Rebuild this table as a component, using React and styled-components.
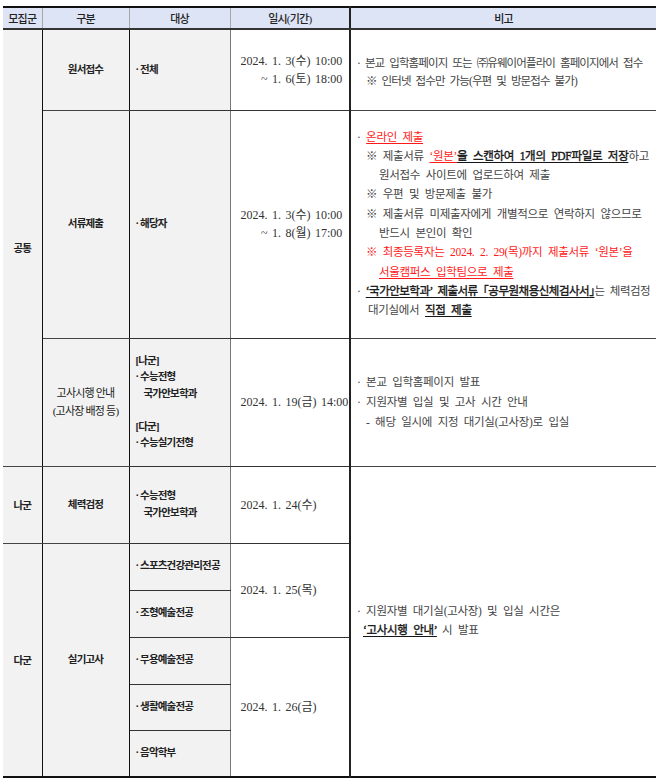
import React from 'react';
import styled, { createGlobalStyle } from 'styled-components';

const GlobalStyle = createGlobalStyle`
  body {
    margin: 0;
    background: #fff;
    font-family: "Liberation Serif", "Noto Sans CJK KR", serif;
    color: #3a3a3a;
  }
`

const Sheet = styled.table`
  margin: 6px 0 0 3px;
  width: 653px;
  table-layout: fixed;
  border-collapse: collapse;
  border-top: 2px solid #111;
  border-bottom: 2px solid #111;
`

const Row = styled.tr`
  height: ${p => p.$h}px;
`

const HeadCell = styled.th`
  background: #dde4f5;
  font-size: 11px;
  font-weight: 500;
  letter-spacing: -0.8px;
  color: #222;
  text-align: center;
  vertical-align: middle;
  padding: 0;
  border-bottom: 2px solid #333;
  border-right: ${p => p.$thick ? '2px solid #222' : p.$last ? '0' : '1px solid #a8a8a8'};
`

const GroupCell = styled.td`
  background: #f2f2f2;
  text-align: center;
  vertical-align: middle;
  padding: 0;
  font-size: 10.5px;
  font-weight: 700;
  letter-spacing: -0.8px;
  color: #222;
  border-right: 1px solid #111;
  border-bottom: 1px solid #444;
`

const KindCell = styled.td`
  background: #f2f2f2;
  text-align: center;
  vertical-align: middle;
  padding: 0;
  font-size: ${p => p.$light ? 11 : 10.5}px;
  font-weight: ${p => p.$light ? 400 : 700};
  letter-spacing: -0.8px;
  line-height: 18px;
  color: #222;
  border-right: 1px solid #111;
  border-bottom: 1px solid #444;
`

const TargetCell = styled.td`
  background: #f2f2f2;
  vertical-align: middle;
  padding: 0 0 0 6px;
  font-size: 10.5px;
  font-weight: 700;
  letter-spacing: -0.8px;
  line-height: 16.5px;
  color: #222;
  border-right: 1px solid #777;
  border-bottom: 1px solid #333;
`

const TargetLine = styled.div`
  padding-left: ${p => p.$indent || 0}px;
  min-height: 16.5px;
  white-space: nowrap;
`

const DateCell = styled.td`
  background: #fff;
  vertical-align: middle;
  padding: 0 0 0 10px;
  font-size: 12px;
  word-spacing: 1.5px;
  line-height: 18px;
  white-space: nowrap;
  color: #333;
  border-right: 2px solid #222;
  border-bottom: 1px solid #333;
`

const DateBlock = styled.div`
  display: inline-block;
  text-align: right;
`

const NoteCell = styled.td`
  background: #fff;
  vertical-align: middle;
  padding: ${p => p.$pt || 0}px 0 0 6px;
  font-size: 11.5px;
  letter-spacing: ${p => p.$tight ? -0.9 : -0.3}px;
  word-spacing: 3px;
  line-height: ${p => p.$lh || 19}px;
  color: #444;
  border-bottom: 1px solid #444;
`

const NoteLine = styled.div`
  padding-left: ${p => p.$indent || 0}px;
  white-space: nowrap;
  letter-spacing: ${p => p.$tight ? '-0.5px' : 'inherit'};
  color: ${p => p.$red ? '#ff1a1a' : 'inherit'};
`

const Red = styled.span`
  color: #ff1a1a;
  text-decoration: ${p => p.$u ? 'underline' : 'none'};
  text-underline-offset: 2px;
`

const Strong = styled.span`
  color: #151515;
  -webkit-text-stroke: 0.35px #151515;
  text-decoration: underline;
  text-decoration-thickness: 1px;
  text-underline-offset: 2px;
`

const Bracket = styled.span`
  font-feature-settings: "halt";
`

export default function App() {
  return (
    <>
      <GlobalStyle />
      <Sheet>
        <colgroup>
          <col style={{ width: 39 }} />
          <col style={{ width: 87 }} />
          <col style={{ width: 101 }} />
          <col style={{ width: 120 }} />
          <col style={{ width: 306 }} />
        </colgroup>
        <thead>
          <Row $h={22}>
            <HeadCell>모집군</HeadCell>
            <HeadCell>구분</HeadCell>
            <HeadCell>대상</HeadCell>
            <HeadCell $thick>일시(기간)</HeadCell>
            <HeadCell $last>비고</HeadCell>
          </Row>
        </thead>
        <tbody>
          <Row $h={81}>
            <GroupCell rowSpan={3}>공통</GroupCell>
            <KindCell>원서접수</KindCell>
            <TargetCell><TargetLine>· 전체</TargetLine></TargetCell>
            <DateCell>
              <DateBlock>2024. 1. 3(수) 10:00<br />~ 1. 6(토) 18:00</DateBlock>
            </DateCell>
            <NoteCell $lh={18} $pt={4} $tight>
              <NoteLine>· 본교 입학홈페이지 또는 ㈜유웨이어플라이 홈페이지에서 접수</NoteLine>
              <NoteLine $indent={9}>※ 인터넷 접수만 가능(우편 및 방문접수 불가)</NoteLine>
            </NoteCell>
          </Row>
          <Row $h={228}>
            <KindCell>서류제출</KindCell>
            <TargetCell><TargetLine>· 해당자</TargetLine></TargetCell>
            <DateCell>
              <DateBlock>2024. 1. 3(수) 10:00<br />~ 1. 8(월) 17:00</DateBlock>
            </DateCell>
            <NoteCell $lh={19.3}>
              <NoteLine>· <Red $u>온라인 제출</Red></NoteLine>
              <NoteLine $indent={9}>
                ※ 제출서류 <Red $u>‘원본’</Red><Strong>을 스캔하여 1개의 PDF파일로 저장</Strong>하고
              </NoteLine>
              <NoteLine $indent={22}>원서접수 사이트에 업로드하여 제출</NoteLine>
              <NoteLine $indent={9}>※ 우편 및 방문제출 불가</NoteLine>
              <NoteLine $indent={9}>※ 제출서류 미제출자에게 개별적으로 연락하지 않으므로</NoteLine>
              <NoteLine $indent={22}>반드시 본인이 확인</NoteLine>
              <NoteLine $indent={9} $red>※ 최종등록자는 2024. 2. 29(목)까지 제출서류 ‘원본’을</NoteLine>
              <NoteLine $indent={22}><Red $u>서울캠퍼스 입학팀으로 제출</Red></NoteLine>
              <NoteLine $tight>
                · <Strong>‘국가안보학과’ 제출서류 <Bracket>「</Bracket>공무원채용신체검사서<Bracket>」</Bracket></Strong>는 체력검정
              </NoteLine>
              <NoteLine $indent={11}>대기실에서 <Strong>직접 제출</Strong></NoteLine>
            </NoteCell>
          </Row>
          <Row $h={128}>
            <KindCell $light>고사시행 안내<br />(고사장 배정 등)</KindCell>
            <TargetCell>
              <TargetLine>[나군]</TargetLine>
              <TargetLine>· 수능전형</TargetLine>
              <TargetLine $indent={8}>국가안보학과</TargetLine>
              <TargetLine />
              <TargetLine>[다군]</TargetLine>
              <TargetLine>· 수능실기전형</TargetLine>
            </TargetCell>
            <DateCell>2024. 1. 19(금) 14:00</DateCell>
            <NoteCell $lh={20}>
              <NoteLine>· 본교 입학홈페이지 발표</NoteLine>
              <NoteLine>· 지원자별 입실 및 고사 시간 안내</NoteLine>
              <NoteLine $indent={9}>- 해당 일시에 지정 대기실(고사장)로 입실</NoteLine>
            </NoteCell>
          </Row>
          <Row $h={77}>
            <GroupCell>나군</GroupCell>
            <KindCell>체력검정</KindCell>
            <TargetCell>
              <TargetLine>· 수능전형</TargetLine>
              <TargetLine $indent={8}>국가안보학과</TargetLine>
            </TargetCell>
            <DateCell>2024. 1. 24(수)</DateCell>
            <NoteCell rowSpan={6}>
              <NoteLine>· 지원자별 대기실(고사장) 및 입실 시간은</NoteLine>
              <NoteLine $indent={6}><Strong>‘고사시행 안내’</Strong> 시 발표</NoteLine>
            </NoteCell>
          </Row>
          <Row $h={47}>
            <GroupCell rowSpan={5}>다군</GroupCell>
            <KindCell rowSpan={5}>실기고사</KindCell>
            <TargetCell><TargetLine>· 스포츠건강관리전공</TargetLine></TargetCell>
            <DateCell rowSpan={2}>2024. 1. 25(목)</DateCell>
          </Row>
          <Row $h={47}>
            <TargetCell><TargetLine>· 조형예술전공</TargetLine></TargetCell>
          </Row>
          <Row $h={47}>
            <TargetCell><TargetLine>· 무용예술전공</TargetLine></TargetCell>
            <DateCell rowSpan={3}>2024. 1. 26(금)</DateCell>
          </Row>
          <Row $h={46}>
            <TargetCell><TargetLine>· 생활예술전공</TargetLine></TargetCell>
          </Row>
          <Row $h={47}>
            <TargetCell><TargetLine>· 음악학부</TargetLine></TargetCell>
          </Row>
        </tbody>
      </Sheet>
    </>
  );
}
